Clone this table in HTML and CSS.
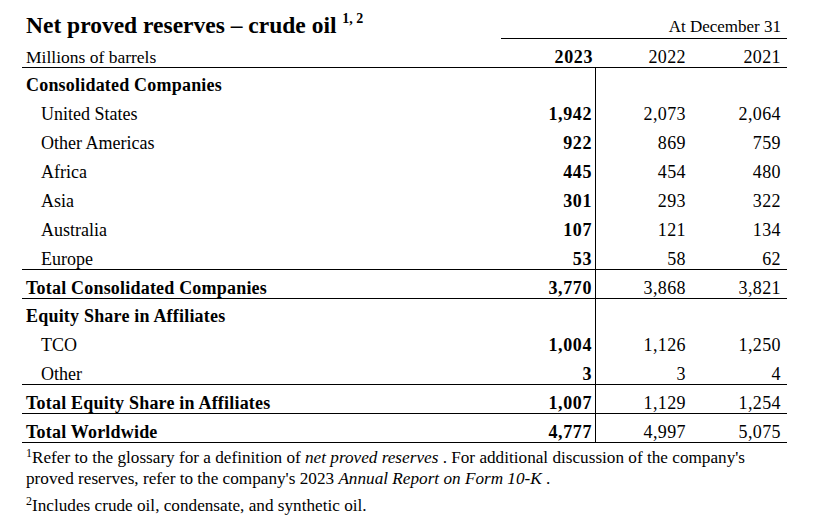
FILE: index.html
```html
<!DOCTYPE html>
<html lang="en">
<head>
<meta charset="utf-8">
<title>Net proved reserves – crude oil</title>
<link rel="stylesheet" href="styles.css">
</head>
<body>
<div class="sheet">
  <div class="tbl">
    <div class="c title-cell"><h1 class="title">Net proved reserves – crude oil <sup class="tsup">1, 2</sup></h1></div>
    <div class="c span3 rule">At December 31</div>

    <div class="c hd lbl cat rule">Millions of barrels</div>
    <div class="c hd num v0 rule b">2023</div>
    <div class="c hd num rule">2022</div>
    <div class="c hd num rule last">2021</div>

    <div class="c lbl cat b">Consolidated Companies</div>
    <div class="c num v"></div><div class="c num"></div><div class="c num last"></div>

    <div class="c lbl sub">United States</div>
    <div class="c num v b">1,942</div><div class="c num">2,073</div><div class="c num last">2,064</div>

    <div class="c lbl sub">Other Americas</div>
    <div class="c num v b">922</div><div class="c num">869</div><div class="c num last">759</div>

    <div class="c lbl sub">Africa</div>
    <div class="c num v b">445</div><div class="c num">454</div><div class="c num last">480</div>

    <div class="c lbl sub">Asia</div>
    <div class="c num v b">301</div><div class="c num">293</div><div class="c num last">322</div>

    <div class="c lbl sub">Australia</div>
    <div class="c num v b">107</div><div class="c num">121</div><div class="c num last">134</div>

    <div class="c lbl sub rule">Europe</div>
    <div class="c num v b rule">53</div><div class="c num rule">58</div><div class="c num last rule">62</div>

    <div class="c tot lbl cat b rule">Total Consolidated Companies</div>
    <div class="c tot num v b rule">3,770</div><div class="c tot num rule">3,868</div><div class="c tot num last rule">3,821</div>

    <div class="c lbl cat b">Equity Share in Affiliates</div>
    <div class="c num v"></div><div class="c num"></div><div class="c num last"></div>

    <div class="c lbl sub">TCO</div>
    <div class="c num v b">1,004</div><div class="c num">1,126</div><div class="c num last">1,250</div>

    <div class="c lbl sub rule">Other</div>
    <div class="c num v b rule">3</div><div class="c num rule">3</div><div class="c num last rule">4</div>

    <div class="c tot lbl cat b rule">Total Equity Share in Affiliates</div>
    <div class="c tot num v b rule">1,007</div><div class="c tot num rule">1,129</div><div class="c tot num last rule">1,254</div>

    <div class="c tot lbl cat b rule">Total Worldwide</div>
    <div class="c tot num v b rule">4,777</div><div class="c tot num rule">4,997</div><div class="c tot num last rule">5,075</div>
  </div>

  <div class="notes">
    <p class="note"><sup class="nsup">1</sup>Refer to the glossary for a definition of <i>net proved reserves</i> . For additional discussion of the company's proved reserves, refer to the company's 2023 <i>Annual Report on Form 10-K</i> .</p>
    <p class="note"><sup class="nsup">2</sup>Includes crude oil, condensate, and synthetic oil.</p>
  </div>
</div>
</body>
</html>
```

FILE: styles.css
```css
* { box-sizing: border-box; }

html, body {
  margin: 0;
  padding: 0;
  background: #ffffff;
}

body {
  font-family: "Liberation Serif", "Times New Roman", serif;
  font-size: 18px;
  color: #000000;
}

.sheet {
  padding-left: 22px;
  width: 787px;
}

.tbl {
  display: grid;
  grid-template-columns: 479px 95px 95px 96px;
  grid-template-rows: 39px 29px 29px 29px 29px 29px 29px 29px 28px 29px 29px 29px 28px 29px 29px;
}

.c {
  display: flex;
  align-items: flex-start;
  line-height: 18px;
  padding-top: 8px;
  padding-bottom: 0;
  white-space: nowrap;
}

.c.tot { padding-top: 9px; }

.c.hd {
  align-items: flex-end;
  padding-top: 0;
  padding-bottom: 1px;
}

.title-cell {
  align-items: flex-end;
  padding: 0 0 2px 4px;
}

.title {
  margin: 0;
  font-size: 23.5px;
  line-height: 23px;
  font-weight: bold;
}

.tsup {
  font-size: 14px;
  line-height: 0;
  vertical-align: 10px;
}

.span3 {
  grid-column: 2 / span 3;
  align-items: flex-end;
  justify-content: flex-end;
  padding: 0 6px 2px 0;
  font-size: 17px;
}

.rule {
  border-bottom: 1px solid #000;
}

.lbl.hd { font-size: 17.5px; }

.cat { padding-left: 4px; }
.sub { padding-left: 19px; }

.lbl.b { letter-spacing: 0.2px; }

.num {
  justify-content: flex-end;
  padding-right: 5px;
  letter-spacing: 0.4px;
}

.num.b { letter-spacing: 0.6px; }

.num.v {
  border-right: 1px solid #000;
  padding-right: 3px;
}

.num.v0 { padding-right: 3px; }

.num.last { padding-right: 6px; }

.b { font-weight: bold; }

.notes {
  width: 765px;
  padding: 4px 0 0 4px;
  font-size: 17.2px;
}

.note {
  margin: 0 0 6px 0;
  line-height: 21px;
}

.nsup {
  font-size: 12px;
  line-height: 0;
  vertical-align: 6px;
}
```
